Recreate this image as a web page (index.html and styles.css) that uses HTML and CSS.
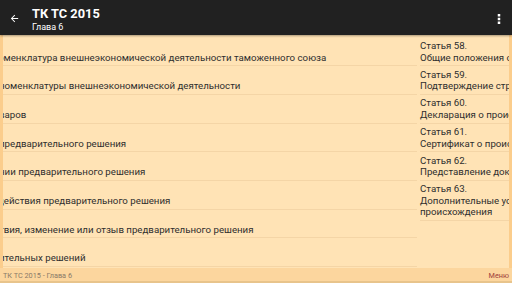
FILE: index.html
```html
<!DOCTYPE html>
<html>
	<head>
		<meta charset="UTF-8">
		<title>ТК ТС 2015</title>
		<link rel="stylesheet" href="styles.css">
	</head>
	<body>
		<header class="toolbar">
			<svg class="back" width="11" height="11" viewBox="0 0 24 24">
				<path d="M20 11H7.8l5.6-5.6L12 4l-8 8 8 8 1.4-1.4L7.8 13H20z" fill="#fff"/>
			</svg>
			<div class="titles">
				<div class="title">ТК ТС 2015</div>
				<div class="subtitle">Глава 6</div>
			</div>
			<svg class="more" width="4" height="10" viewBox="0 0 4 10">
				<rect x="0.75" y="0" width="2.5" height="2.5" fill="#fff"/>
				<rect x="0.75" y="3.75" width="2.5" height="2.5" fill="#fff"/>
				<rect x="0.75" y="7.5" width="2.5" height="2.5" fill="#fff"/>
			</svg>
		</header>
		<main class="panes">
			<div class="pane pane-left">
				<div class="row"><div class="line"></div><div class="line" style="margin-left:-5px">оменклатура внешнеэкономической деятельности таможенного союза</div></div>
				<div class="row"><div class="line"></div><div class="line" style="margin-left:-4px">номенклатуры внешнеэкономической деятельности</div></div>
				<div class="row"><div class="line"></div><div class="line" style="margin-left:-4px">варов</div></div>
				<div class="row"><div class="line"></div><div class="line" style="margin-left:-4px">предварительного решения</div></div>
				<div class="row"><div class="line"></div><div class="line" style="margin-left:-4px">нии предварительного решения</div></div>
				<div class="row"><div class="line"></div><div class="line" style="margin-left:-5px">действия предварительного решения</div></div>
				<div class="row"><div class="line"></div><div class="line" style="margin-left:-4px">твия, изменение или отзыв предварительного решения</div></div>
				<div class="row"><div class="line"></div><div class="line" style="margin-left:-4px">ительных решений</div></div>
			</div>
			<div class="pane pane-right">
				<div class="row"><div class="line">Статья 58.</div><div class="line">Общие положения о происхождении товаров</div></div>
				<div class="row"><div class="line">Статья 59.</div><div class="line">Подтверждение страны происхождения товаров</div></div>
				<div class="row"><div class="line">Статья 60.</div><div class="line">Декларация о происхождении товара</div></div>
				<div class="row"><div class="line">Статья 61.</div><div class="line">Сертификат о происхождении товара</div></div>
				<div class="row"><div class="line">Статья 62.</div><div class="line">Представление документов</div></div>
				<div class="row"><div class="line">Статья 63.</div><div class="line">Дополнительные условия</div><div class="line">происхождения</div></div>
			</div>
		</main>
		<footer class="bottombar">
			<span class="status">ТК ТС 2015 - Глава 6</span>
			<span class="menu">Меню</span>
		</footer>
	</body>
</html>
```

FILE: styles.css
```css
* {
	margin: 0;
	padding: 0;
	box-sizing: border-box;
}
body {
	width: 512px;
	height: 283px;
	overflow: hidden;
	display: flex;
	flex-direction: column;
	background-color: #ffe3b5;
	font-family: Roboto, "Liberation Sans", sans-serif;
	color: #2e2e2e;
}
.toolbar {
	height: 35px;
	flex: none;
	display: flex;
	align-items: center;
	background-color: #212121;
	color: #fff;
	box-shadow: 0 1px 2px rgba(0, 0, 0, 0.35);
	position: relative;
	z-index: 1;
}
.back {
	margin-left: 9px;
	margin-right: 12px;
	margin-top: 2px;
}
.titles {
	flex: 1;
	padding-top: 5px;
}
.title {
	font-size: 12.8px;
	font-weight: bold;
	line-height: 14px;
}
.subtitle {
	font-size: 9px;
	line-height: 12px;
}
.more {
	margin-right: 11px;
	margin-top: 2px;
}
.panes {
	flex: 1;
	display: flex;
	overflow: hidden;
	border-left: 3px solid #fbcd8c;
	border-right: 3px solid #fbcd8c;
	padding-top: 2.5px;
}
.pane {
	overflow: hidden;
}
.pane-left {
	width: 414px;
	flex: none;
}
.pane-right {
	flex: 1;
	padding-left: 3px;
}
.row {
	padding: 2.5px 0 2.2px;
	border-bottom: 1px solid #f4d5a6;
}
.line {
	font-size: 9.7px;
	line-height: 11.5px;
	height: 11.5px;
	white-space: nowrap;
}
.bottombar {
	height: 15px;
	flex: none;
	display: flex;
	justify-content: space-between;
	align-items: center;
	padding: 2px 3px 0 3px;
	background-color: #fcd69e;
	border-bottom: 2px solid #e8c48c;
	font-size: 7.3px;
}
.status {
	color: #8a7a68;
}
.menu {
	color: #a0403a;
}
```
